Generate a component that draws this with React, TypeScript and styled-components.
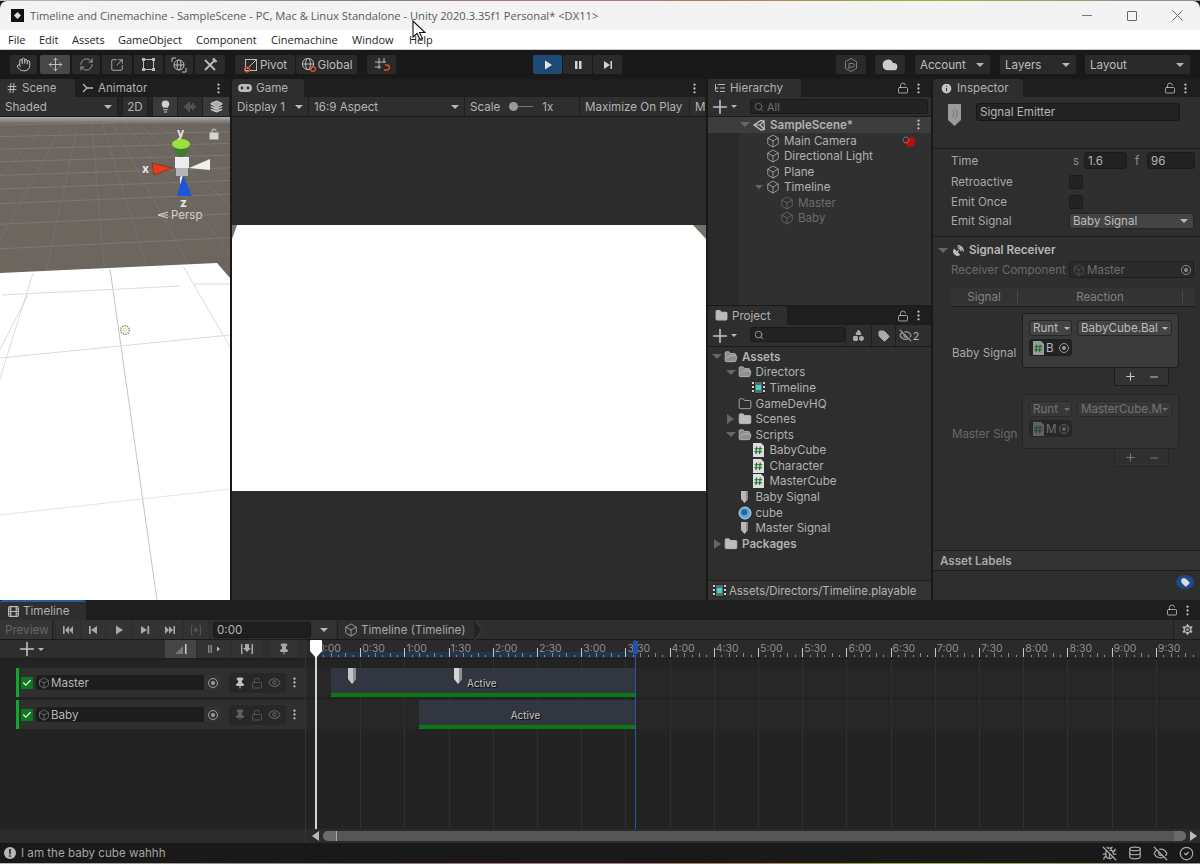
import React from "react";
import styled, { createGlobalStyle, css } from "styled-components";
import {
  AudioLines, Box, BugOff, CircleCheck, Cloud, Database, EllipsisVertical, Eye, EyeOff, Film, Folder, FolderOpen,
  Hand, Hash, Info, Layers, Lightbulb, ListTree, LockOpen, Minus, Move, Pin, Plus, RefreshCw,
  SatelliteDish, Search, Settings, Shapes, SquareArrowOutUpRight, Tag, Check,
} from "lucide-react";

const Global = createGlobalStyle`
  html, body { margin: 0; padding: 0; width: 1200px; height: 864px; overflow: hidden; background: #6f6a5f; }
  * { box-sizing: border-box; }
  #root { width: 1200px; height: 864px; }
`;

const Window = styled.div`
  width: 1200px; height: 864px; display: flex; flex-direction: column; background: #191919;
  font: 11.6px Inter, "Liberation Sans", sans-serif; color: #b4b4b4; overflow: hidden;
`;
const Wallpaper = styled.div`
  height: 1px; flex: none;
  background: linear-gradient(90deg,#b8b8b8 0,#8c7c70 30%,#a9759f 45%,#a88058 60%,#a5b034 78%,#7f93a8 100%);
`;
const TitleBar = styled.div`
  height: 29px; flex: none; background: #f3f3f3; display: flex; align-items: center; padding-left: 11px; color: #5a5a5a;
  font: 11.17px "Open Sans", sans-serif; border-radius: 7px 7px 0 0;
`;
const AppIcon = styled.span`
  width: 13px; height: 13px; background: #111; margin-right: 6px; display: flex; align-items: center; justify-content: center;
  &::after { content: ""; width: 5px; height: 5px; background: #ddd; transform: rotate(45deg); }
`;
const WinBtns = styled.div`
  margin-left: auto; display: flex; align-items: center; gap: 35px; padding-right: 17px;
`;
const WinMin = styled.span`width: 10px; height: 1px; background: #777;`;
const WinMax = styled.span`width: 10px; height: 10px; border: 1px solid #666; border-radius: 1px;`;
const Cursor = styled.svg`position: absolute; left: 412px; top: 20px;`;
const MenuBar = styled.div`
  height: 20px; flex: none; background: #fff; color: #222; display: flex; align-items: center; font: 11px "Open Sans", sans-serif;
  padding-left: 8px; border-bottom: 1px solid #ccc;
`;
const MenuItem = styled.span<{ $w: number }>`width: ${(p) => p.$w}px; flex: none;`;

const TopBar = styled.div`
  height: 29px; flex: none; display: flex; align-items: center; background: #191919; padding: 0 10px; position: relative;
`;
const ToolBtn = styled.div<{ $w: number; $on?: boolean; $ml?: number; $blue?: boolean }>`
  width: ${(p) => p.$w}px; height: 19px; flex: none; margin-left: ${(p) => p.$ml ?? 2}px;
  background: ${(p) => (p.$blue ? "#1f4a78" : p.$on ? "#474747" : "#2a2a2a")}; border-radius: 2px;
  display: flex; align-items: center; justify-content: center; gap: 1px; color: #bdbdbd;
`;
const DropBtn = styled(ToolBtn)`
  justify-content: space-between; padding: 0 6px 0 5px;
`;
const Caret = styled.span<{ $dir?: "down" | "right" | "left"; $c?: string; $s?: number }>`
  display: inline-block; flex: none; width: 0; height: 0;
  ${(p) =>
    p.$dir === "right"
      ? css`border-top: 5px solid transparent; border-bottom: 5px solid transparent; border-left: 7px solid ${p.$c ?? "#5f5f5f"};`
      : p.$dir === "left"
      ? css`border-top: 5px solid transparent; border-bottom: 5px solid transparent; border-right: 7px solid ${p.$c ?? "#5f5f5f"};`
      : css`border-left: ${p.$s ?? 4}px solid transparent; border-right: ${p.$s ?? 4}px solid transparent; border-top: ${p.$s ?? 4}px solid ${p.$c ?? "#b8b8b8"};`}
`;

const Panels = styled.div`
  height: 521px; flex: none; display: flex; gap: 2px;
`;
const Panel = styled.section<{ $w: number; $h?: number }>`
  width: ${(p) => p.$w}px; flex: ${(p) => (p.$h ? `0 0 ${p.$h}px` : "1 1 0")}; display: flex; flex-direction: column; background: #2e2e2e; min-height: 0; overflow: hidden;
`;
const Column = styled(Panel)`flex: none;`;
const Stack = styled.div<{ $w: number }>`
  width: ${(p) => p.$w}px; flex: none; display: flex; flex-direction: column; gap: 1px;
`;
const TabStrip = styled.div<{ $h?: number }>`
  height: ${(p) => p.$h ?? 18}px; flex: none; display: flex; align-items: stretch; background: #1e1e1e; color: #b0b0b0;
`;
const Tab = styled.div<{ $w: number; $on?: boolean; $pad?: number; $accent?: boolean; $gap?: number }>`
  width: ${(p) => p.$w}px; flex: none; display: flex; align-items: center; gap: ${(p) => p.$gap ?? 4}px; padding-left: ${(p) => p.$pad ?? 7}px;
  background: ${(p) => (p.$on ? "#2e2e2e" : "transparent")}; border-radius: 3px 3px 0 0;
  ${(p) => p.$accent && css`border-top: 2px solid #2b5a94;`}
`;
const TabTools = styled.div<{ $gap?: number; $pr?: number }>`
  margin-left: auto; display: flex; align-items: center; gap: ${(p) => p.$gap ?? 2}px; padding-right: ${(p) => p.$pr ?? 5}px; color: #bdbdbd;
`;

const Bar = styled.div<{ $h?: number }>`
  height: ${(p) => p.$h ?? 20}px; flex: none; display: flex; align-items: stretch; background: #2e2e2e; border-bottom: 1px solid #1b1b1b; position: relative;
`;
const Seg = styled.div<{ $w: number; $center?: boolean; $bg?: string }>`
  width: ${(p) => p.$w}px; flex: none; display: flex; align-items: center;
  justify-content: ${(p) => (p.$center ? "center" : "space-between")}; padding: ${(p) => (p.$center ? "0" : "0 5px")};
  background: ${(p) => p.$bg ?? "#2e2e2e"}; border-right: 1px solid #1f1f1f; white-space: nowrap; overflow: hidden;
`;
const SliderDot = styled.span`
  width: 9px; height: 9px; border-radius: 50%; background: #9a9a9a; margin-left: 9px; position: relative; flex: none;
  &::after { content: ""; position: absolute; left: 9px; top: 4px; width: 15px; height: 1px; background: #777; }
`;
const ScaleValue = styled.span`margin-left: 24px;`;
const LeftText = styled.span`flex: 1;`;

const SceneView = styled.svg`flex: 1; display: block; width: 100%; min-height: 0;`;
const GameView = styled.div`flex: 1; display: flex; flex-direction: column; background: #2b2b2b; position: relative;`;
const Letterbox = styled.div<{ $h: number }>`height: ${(p) => p.$h}px; flex: none; background: #2b2b2b;`;
const GameFrame = styled.div`
  flex: 1; background: #fff; position: relative;
  &::before, &::after { content: ""; position: absolute; top: 0; border-top: 14px solid #76716b; }
  &::before { left: 0; border-right: 5px solid transparent; }
  &::after { right: 0; border-left: 13px solid transparent; }
`;

const Search2 = styled.div<{ $w: number; $ml: number }>`
  width: ${(p) => p.$w}px; height: 15px; margin: 2px 0 0 ${(p) => p.$ml}px; background: #232323; border: 1px solid #1a1a1a; border-radius: 3px;
  display: flex; align-items: center; gap: 3px; padding-left: 3px; color: #6f6f6f; font-size: 11px;
`;
const AddBtn = styled.div<{ $w?: number; $pad?: number }>`
  width: ${(p) => p.$w ?? 40}px; flex: none; display: flex; align-items: center; gap: 0; padding-left: ${(p) => p.$pad ?? 1}px; color: #c4c4c4;
  svg { flex: none; margin: -2px 0; }
`;

const TreePane = styled.div<{ $strip?: number; $top?: number }>`
  flex: 1; min-height: 0; padding-top: ${(p) => p.$top ?? 0}px;
  background: ${(p) => (p.$strip ? `linear-gradient(90deg,#2a2a2a ${p.$strip}px,#303030 ${p.$strip}px)` : "#2e2e2e")};
`;
const TreeRow = styled.div<{ $i: number; $h?: number; $head?: boolean; $dim?: boolean; $bold?: boolean }>`
  height: ${(p) => p.$h ?? 15.5}px; display: flex; align-items: center; padding-left: ${(p) => p.$i}px; white-space: nowrap;
  color: ${(p) => (p.$dim ? "#6c6c6c" : "#b2b2b2")}; font-weight: ${(p) => (p.$bold ? 600 : 400)};
  background: ${(p) => (p.$head ? "#3d3d3d" : "transparent")}; position: relative;
`;
const CaretSlot = styled.span`width: 12px; flex: none; display: flex; justify-content: center; align-items: center;`;
const IconSlot = styled.span`width: 16px; flex: none; display: flex; justify-content: center; align-items: center; margin-right: 3px;`;
const RowEnd = styled.span<{ $r: number }>`position: absolute; right: ${(p) => p.$r}px; top: 1px; display: flex;`;
const PathBar = styled.div`
  height: 20px; flex: none; display: flex; align-items: center; padding-left: 5px; gap: 3px; background: #333; border-top: 1px solid #1f1f1f; font-size: 11.4px; white-space: nowrap;
`;
const SquareTool = styled.div<{ $w: number }>`
  width: ${(p) => p.$w}px; flex: none; border-left: 1px solid #1f1f1f; display: flex; align-items: center; justify-content: center; gap: 1px; font-size: 11px;
`;

const InspHead = styled.div`
  height: 52px; flex: none; display: flex; padding: 6px 0 0 14px; border-bottom: 1px solid #1d1d1d;
`;
const NameInput = styled.div`
  width: 204px; height: 18px; margin-left: 14px; background: #222; border: 1px solid #191919; border-radius: 3px;
  padding-left: 3px; display: flex; align-items: center; color: #b6b6b6;
`;
const Props = styled.div`padding: 1px 5px 6px 18px; border-bottom: 1px solid #1d1d1d; height: 88px; flex: none;`;
const PropRow = styled.div<{ $h: number; $dim?: boolean }>`
  height: ${(p) => p.$h}px; flex: none; display: flex; align-items: center; color: ${(p) => (p.$dim ? "#696969" : "#a8a8a8")};
`;
const PropLabel = styled.span`width: 118px; flex: none; white-space: nowrap;`;
const Unit = styled.span<{ $w: number }>`width: ${(p) => p.$w}px; flex: none; color: #8f8f8f; margin-left: ${(p) => (p.$w > 11 ? 0 : 4)}px;`;
const NumInput = styled.div<{ $w: number; $mr?: number }>`
  width: ${(p) => p.$w}px; height: 17px; background: #222; border: 1px solid #1b1b1b; border-radius: 3px; padding-left: 3px; margin-right: ${(p) => p.$mr ?? 0}px;
  display: flex; align-items: center; color: #b6b6b6;
`;
const Toggle = styled.div`width: 14px; height: 14px; background: #232323; border: 1px solid #1c1c1c; border-radius: 2px;`;
const Select = styled.div<{ $w: number; $h?: number; $dim?: boolean; $pr?: number }>`
  width: ${(p) => p.$w}px; height: ${(p) => p.$h ?? 16}px; flex: none; background: ${(p) => (p.$dim ? "#373737" : "#444")}; border: 1px solid ${(p) => (p.$dim ? "#2d2d2d" : "#262626")}; border-radius: 3px;
  display: flex; align-items: center; justify-content: space-between; padding: 0 ${(p) => p.$pr ?? 5}px 0 3px; overflow: hidden; white-space: nowrap;
  color: ${(p) => (p.$dim ? "#808080" : "#bdbdbd")};
`;
const Clipped = styled.span`overflow: hidden; flex: 1; min-width: 0;`;
const Section = styled.div`flex: 1; min-height: 0; padding: 0 5px 0 18px; display: flex; flex-direction: column;`;
const SecTitle = styled.div`
  height: 24px; flex: none; margin-left: -13px; padding-top: 2px; display: flex; align-items: center; gap: 4px; font-weight: 600; color: #b6b6b6;
`;
const ObjField = styled.div<{ $w: number; $dim?: boolean }>`
  width: ${(p) => p.$w}px; height: 17px; flex: none; display: flex; align-items: center; gap: 2px; padding: 0 2px 0 3px; overflow: hidden; white-space: nowrap;
  background: ${(p) => (p.$dim ? "#2a2a2a" : "#232323")}; border: 1px solid #1e1e1e; border-radius: 3px; color: ${(p) => (p.$dim ? "#6d6d6d" : "#b6b6b6")};
`;
const Dot = styled.span<{ $c?: string; $auto?: boolean }>`
  width: 10px; height: 10px; flex: none; margin-left: ${(p) => (p.$auto ? "auto" : "0")}; border: 1px solid ${(p) => p.$c ?? "#9a9a9a"}; border-radius: 50%; display: flex; align-items: center; justify-content: center;
  &::after { content: ""; width: 4px; height: 4px; border-radius: 50%; background: ${(p) => p.$c ?? "#9a9a9a"}; }
`;
const SigHead = styled.div`
  height: 19px; flex: none; margin-top: 10px; display: flex; align-items: center; color: #818181; background: #333; border-bottom: 1px solid #1b1b1b;
`;
const SigCol = styled.span<{ $w: number }>`
  width: ${(p) => p.$w}px; flex: none; text-align: center; border-right: 1px solid #4a4a4a; height: 12px; line-height: 12px;
`;
const SigRow = styled.div<{ $mt: number; $dim?: boolean }>`
  flex: none; margin-top: ${(p) => p.$mt}px; display: flex; flex-direction: column; ${(p) => p.$dim && css`opacity: .48;`}
`;
const SigMain = styled.div`display: flex; align-items: flex-end; margin-left: 1px;`;
const SigLabel = styled.span`width: 70px; flex: none; padding-bottom: 8px; white-space: nowrap; overflow: hidden; color: #a8a8a8;`;
const SigBox = styled.div`
  width: 157px; height: 55px; background: #3a3a3a; border: 1px solid #1d1d1d; border-radius: 3px; padding: 6px; display: flex; flex-wrap: wrap; align-content: flex-start; gap: 3px 5px;
`;
const SigFoot = styled.div`
  width: 55px; height: 18px; margin-left: 163px; background: #333; border: 1px solid #1d1d1d; border-top: 0; border-radius: 0 0 3px 3px;
  display: flex; align-items: center; justify-content: space-around; padding: 0 3px; color: #c8c8c8;
`;
const LabelsHead = styled.div`
  height: 21px; flex: none; padding-left: 7px; display: flex; align-items: center; font-weight: 600; color: #a8a8a8; background: #333;
  border-top: 1px solid #1d1d1d; border-bottom: 1px solid #1d1d1d;
`;
const LabelsBody = styled.div`height: 29px; flex: none; display: flex; align-items: flex-start; justify-content: flex-end; padding: 4px 6px 0 0;`;
const TagBadge = styled.span`
  width: 18px; height: 14px; border-radius: 50%; background: #1e4a8a; display: flex; align-items: center; justify-content: center; color: #ddd;
`;

const Timeline = styled.section`flex: 1; min-height: 0; display: flex; flex-direction: column; background: #232323;`;
const TransportBar = styled.div`
  height: 20px; flex: none; display: flex; align-items: stretch; background: #2e2e2e; border-bottom: 1px solid #1b1b1b;
`;
const PreviewBtn = styled.div`
  width: 53px; flex: none; display: flex; align-items: center; padding-left: 5px; color: #666; background: #353535; border-right: 1px solid #1f1f1f;
`;
const TransBtn = styled.div<{ $w: number; $ml?: number }>`
  width: ${(p) => p.$w}px; flex: none; display: flex; align-items: center; justify-content: center; margin-left: ${(p) => p.$ml ?? 1}px; background: #333; color: #a8a8a8;
`;
const TimeField = styled.div`
  width: 98px; height: 16px; margin: 2px 0 0 5px; background: #1f1f1f; border: 1px solid #181818; border-radius: 3px; padding-left: 3px; display: flex; align-items: center;
`;
const Crumb = styled.div`
  position: relative; width: 146px; margin-left: 1px; display: flex; align-items: center; gap: 3px; padding-left: 6px; background: #2e2e2e; color: #a8a8a8; border-left: 1px solid #1f1f1f; white-space: nowrap;
`;
const CrumbEnd = styled.svg`position: absolute; right: -1px; top: 0;`;
const GearSlot = styled.div`margin-left: auto; width: 27px; display: flex; align-items: center; justify-content: center; border-left: 1px solid #1f1f1f; color: #b0b0b0;`;

const TLBody = styled.div`flex: 1; min-height: 0; display: flex; position: relative;`;
const TLLeft = styled.div`width: 306px; flex: none; display: flex; flex-direction: column; border-right: 1px solid #333;`;
const TLHeadBar = styled.div`
  height: 19px; flex: none; display: flex; align-items: stretch; background: #2e2e2e; border-bottom: 1px solid #1d1d1d;
`;
const HeadBtn = styled.div<{ $w: number; $ml?: number; $on?: boolean }>`
  width: ${(p) => p.$w}px; margin-left: ${(p) => p.$ml ?? 2}px; flex: none; display: flex; align-items: center; justify-content: center; gap: 2px;
  background: ${(p) => (p.$on ? "#454545" : "#333")}; color: #a8a8a8;
`;
const TrackPad = styled.div`flex: 1; padding-top: 9px; display: flex; flex-direction: column; gap: 3px; background: #232323;`;
const TrackHead = styled.div`
  height: 29px; margin-left: 16px; background: #2f2f2f; border-left: 3px solid #0fa82a; display: flex; align-items: center; padding-left: 2px;
`;
const TrackCheck = styled.span`
  width: 12px; height: 12px; background: #0b7a1f; display: flex; align-items: center; justify-content: center; color: #eee; flex: none;
`;
const TrackName = styled.div`
  width: 185px; height: 15px; margin-left: 3px; background: #1d1d1d; border-radius: 3px; display: flex; align-items: center; gap: 1px; padding-left: 2px; color: #b6b6b6; overflow: hidden; position: relative;
`;
const NameTarget = styled.span`
  position: absolute; right: 0; top: 0; width: 17px; height: 15px; background: #333; display: flex; align-items: center; justify-content: center;
`;
const TrackTools = styled.div`
  width: 57px; height: 20px; margin-left: 8px; background: #272727; border-radius: 3px; display: flex; align-items: center; justify-content: space-around; padding: 0 2px; color: #5e5e5e;
`;
const TrackMenu = styled.span`margin-left: 2px; display: flex; color: #b0b0b0;`;

const TLRight = styled.div`flex: 1; min-width: 0; display: flex; flex-direction: column; position: relative;`;
const Ruler = styled.div`
  height: 19px; flex: none; background: #2a2a2a; position: relative; overflow: hidden; border-bottom: 1px solid #1c1c1c;
`;
const RangeStrip = styled.div`position: absolute; left: 10px; width: 320px; bottom: 1px; height: 5px; background: #243550;`;
const Major = styled.span`position: absolute; bottom: 1px; width: 1px; height: 9px; background: #c9c9c9;`;
const Minor = styled.span<{ $tall?: boolean }>`position: absolute; bottom: 1px; width: 1px; height: ${(p) => (p.$tall ? 4 : 2)}px; background: #8a8a8a;`;
const TickLabel = styled.span`position: absolute; top: 2px; font-size: 10.5px; line-height: 13px; color: #8f8f8f;`;

const Canvas = styled.div`flex: 1; position: relative; overflow: hidden; background: #232323;`;
const GridLine = styled.span`position: absolute; top: 0; bottom: 0; width: 1px; background: #303030;`;
const Band = styled.div<{ $t: number }>`position: absolute; left: 0; right: 0; top: ${(p) => p.$t}px; height: 29px; background: #272727;`;
const Clip = styled.div<{ $l: number; $w: number; $t: number; $tx: string }>`
  position: absolute; left: ${(p) => p.$l}px; width: ${(p) => p.$w}px; top: ${(p) => p.$t}px; height: 29px; background: #323640; border-bottom: 4px solid #097a14;
  display: flex; align-items: center; padding: 4px ${(p) => (p.$tx === "center" ? 4 : 0)}px 0 0; justify-content: ${(p) => p.$tx};
  font-size: 10px; color: #c8c8c8; text-shadow: 1px 1px 1px #000;
`;
const ClipText = styled.span<{ $ml?: number }>`margin-left: ${(p) => p.$ml ?? 0}px;`;
const Marker = styled.svg<{ $l: number }>`position: absolute; left: ${(p) => p.$l}px; top: 0;`;
const PlayHead = styled.div`
  position: absolute; left: 9px; top: 0; bottom: 0; width: 2px; background: #d4d4d4; pointer-events: none;
`;
const PlayTop = styled.svg`position: absolute; left: -5px; top: 0;`;
const EndLine = styled.div`
  position: absolute; left: 329px; top: 0; bottom: 0; width: 1px; background: #2a56a0;
  &::before { content: ""; position: absolute; left: -2px; top: 1px; width: 5px; height: 13px; background: #2252a8; }
`;
const ScrollRow = styled.div`height: 14px; flex: none; display: flex; align-items: stretch; background: #2b2b2b;`;
const ScrollLeft = styled.div`width: 306px; flex: none; background: #2b2b2b; border-right: 1px solid #363636;`;
const ScrollMain = styled.div`flex: 1; display: flex; align-items: center; padding: 0 3px 0 6px; gap: 4px;`;
const ScrollTrack = styled.div`
  flex: 1; height: 10px; border-radius: 5px; background: #565656; position: relative;
  &::before { content: ""; position: absolute; left: 0; top: 0; bottom: 0; width: 13px; background: #6c6c6c; border-radius: 5px 0 0 5px; border-right: 1px solid #aaa; }
  &::after { content: ""; position: absolute; right: 0; top: 0; bottom: 0; width: 12px; background: #6a6a6a; border-radius: 0 5px 5px 0; }
`;
const Status = styled.div`
  height: 20px; flex: none; display: flex; align-items: center; padding: 0 6px 0 4px; background: #191919; color: #a4a4a4; border-radius: 0 0 7px 7px;
`;
const StatusBang = styled.span`
  width: 12px; height: 12px; border-radius: 50%; background: #b8b8b8; color: #191919; font: 700 10px/12px Inter, sans-serif; text-align: center; margin-right: 5px;
`;
const StatusIcons = styled.div`margin-left: auto; display: flex; align-items: center; gap: 11px; color: #a8a8a8;`;

const Svg = (p: React.SVGProps<SVGSVGElement> & { s?: number; w?: number; h?: number }) => {
  const { s = 14, w, h, children, ...r } = p;
  return <svg width={w ?? s} height={h ?? s} viewBox={`0 0 ${w ?? s} ${h ?? s}`} {...r}>{children}</svg>;
};

const Dots = ({ c = "#c4c4c4" }: { c?: string }) => <EllipsisVertical size={13} color={c} strokeWidth={2.2} />;
const Lock = ({ c = "#c4c4c4", s = 12 }: { c?: string; s?: number }) => <LockOpen size={s} color={c} strokeWidth={1.6} />;
const AddIcon = () => <Plus size={22} strokeWidth={1.7} />;
const UnityLogo = () => (
  <Svg s={14} fill="none" stroke="#c6c6c6" strokeWidth={1.2}>
    <path d="M2 7 9 2.5l3 .5 .3 8.5-3 .5L2 7Z" /><path d="M2 7h6l4-4M8 7l4 4" />
  </Svg>
);
const PivotIcon = () => (
  <Svg s={16} fill="none"><rect x="2.5" y="2.5" width="11" height="11" stroke="#bbb" /><path d="M4 12 13 3" stroke="#bbb" /><circle cx="4" cy="12.5" r="2.4" stroke="#d8552c" strokeWidth="1.3" /></Svg>
);
const GlobalIcon = () => (
  <Svg s={16} fill="none"><circle cx="7" cy="7" r="5.6" stroke="#bbb" /><ellipse cx="7" cy="7" rx="2.4" ry="5.6" stroke="#bbb" /><path d="M1.4 7h11.2" stroke="#bbb" /><circle cx="12" cy="12" r="2.4" stroke="#d8552c" strokeWidth="1.3" /></Svg>
);
const SnapIcon = () => (
  <Svg s={16} fill="none"><path d="M5 1v11M10 1v5M1 5h11M1 10h6" stroke="#bbb" /><path d="M11 8h1.8a2.2 2.2 0 0 1 0 5H10" stroke="#d8552c" strokeWidth="1.5" /></Svg>
);
const RectIcon = () => (
  <Svg s={15} fill="none"><rect x="2.5" y="2.5" width="10" height="10" stroke="#bbb" /><path d="M1 1h3v3H1zM11 1h3v3h-3zM1 11h3v3H1zM11 11h3v3h-3z" fill="#bbb" /></Svg>
);
const TransIcon = () => (
  <Svg s={16} fill="none" stroke="#bbb"><circle cx="8" cy="8" r="5" /><ellipse cx="8" cy="8" rx="2" ry="5" /><path d="M3 8h10M1 5V1h4M15 11v4h-4" /></Svg>
);
const CustomIcon = () => (
  <Svg s={16} fill="none" stroke="#bbb" strokeWidth="1.8"><path d="M3 3l10 10M13 3 3 13" /><path d="M11 1.5l3.5 3.5" strokeWidth="2.4" /></Svg>
);
const CollabIcon = () => (
  <Svg s={16} fill="none" stroke="#7e7e7e"><path d="M8 1.5 13.5 4.5v7L8 14.5 2.5 11.5v-7Z" /><path d="M6 12V6.5h3.5a1.6 1.6 0 0 1 0 3.6H6" /></Svg>
);
const AnimatorIcon = () => (
  <Svg s={12} fill="none" stroke="#bbb" strokeWidth="1.3"><path d="M1 2l4 4-4 4M5 6h6" /></Svg>
);
const Transport = ({ d, c = "#bdbdbd", s = 12 }: { d: string; c?: string; s?: number }) => (
  <Svg s={s}><path d={d} fill={c} /></Svg>
);
const ScriptIcon = ({ dim }: { dim?: boolean }) => (
  <Svg w={11} h={14}>
    <path d="M0 0h8l3 3v11H0Z" fill={dim ? "#999" : "#dedede"} />
    <path d="M3.6 3.5 3 11M7.2 3.5 6.6 11M1.6 5.8h7.6M1.4 8.8h7.6" stroke="#0f6a22" strokeWidth="1.1" fill="none" />
  </Svg>
);
const FilmIcon = () => (
  <Svg w={13} h={13}>
    <rect width="13" height="13" fill="#2a2a2a" />
    <rect x="3" y="1" width="7" height="11" fill="#5a6a68" />
    <path d="M0 1h2v2H0zM0 5h2v2H0zM0 9h2v2H0zM11 1h2v2h-2zM11 5h2v2h-2zM11 9h2v2h-2z" fill="#d0d0d0" />
    <rect x="4" y="4" width="5" height="5" fill="#3fd6c4" />
  </Svg>
);
const SignalIcon = () => (
  <Svg w={7} h={12}><path d="M0 0h7v8l-3.5 4L0 8Z" fill="#b8b8b8" /><path d="M5 0h2v8l-2 2Z" fill="#8a8a8a" /></Svg>
);
const CubeMat = () => (
  <Svg s={14}><circle cx="7" cy="7" r="6" fill="#5ca8dc" stroke="#c4d4e0" /><circle cx="6.3" cy="6.3" r="3" fill="#2a6496" /></Svg>
);
const CubeIcon = ({ c = "#b8b8b8", s = 14 }: { c?: string; s?: number }) => <Box size={s} color={c} strokeWidth={1.3} />;
const FolderFull = ({ open }: { open?: boolean }) =>
  open ? <FolderOpen size={14} color="#bdbdbd" fill="#8e8e8e" strokeWidth={1.4} /> : <Folder size={14} color="#bdbdbd" fill="#bdbdbd" strokeWidth={1.4} />;
const FolderPlain = () => <Folder size={14} color="#bdbdbd" strokeWidth={1.4} />;

const groundH = [5, 16, 28, 40, 53, 66, 80, 100, 124];
const groundV = [-90, -20, 45, 105, 150, 195, 250, 310, 380];

const Scene = () => (
  <SceneView viewBox="0 0 230 483" preserveAspectRatio="none">
    <defs>
      <linearGradient id="sky" x1="0" y1="0" x2="0" y2="1">
        <stop offset="0" stopColor="#a6acac" /><stop offset="1" stopColor="#6e675f" />
      </linearGradient>
    </defs>
    <rect width="230" height="483" fill="#6d665f" />
    <rect width="230" height="7" fill="url(#sky)" />
    {groundH.map((y, i) => (
      <path key={i} d={`M0 ${y + 3 + i * 0.6}L230 ${y - 1 - i * 0.3}`} stroke="#827e7a" strokeWidth="0.7" />
    ))}
    {groundV.map((x, i) => (
      <path key={i} d={`M${88 + (x - 88) * 0.22} 5L${x} 160`} stroke="#7a7672" strokeWidth="0.7" />
    ))}
    <path d="M0 156 217 146 230 161V483H0Z" fill="#fff" />
    <g stroke="#cfd9e3" strokeWidth="0.9" fill="none">
      <path d="M33 156 -12 300" />
      <path d="M110 152 157 483" stroke="#b4bec8" />
      <path d="M183 149 230 230" />
      <path d="M2 178 180 169M194 167 230 167" />
      <path d="M0 241 230 218" />
      <path d="M0 398 230 372" stroke="#dbe2e8" />
      <path d="M28 178 -4 240" />
    </g>
    <g>
      <circle cx="125" cy="213" r="4.3" fill="none" stroke="#8d8d8d" strokeWidth="1.6" strokeDasharray="1.4 1" />
      <circle cx="125" cy="213" r="2.6" fill="#f2eebd" />
    </g>
    <path d="M173 32 181 42 190 32Z" fill="#3f7d2a" />
    <ellipse cx="181" cy="27" rx="9" ry="5" fill="#98e23a" />
    <path d="M152 46 173 51 154 58Z" fill="#e8391a" stroke="#6c1a10" strokeWidth=".5" />
    <path d="M189 51 210 42 210 53Z" fill="#f0f0f0" />
    <rect x="175" y="40" width="14" height="11" fill="#ececec" />
    <rect x="176" y="51" width="12" height="8" fill="#b5b5b5" />
    <path d="M180 60 183 58 183 66 180 67Z" fill="#eee" />
    <path d="M183 58 177 79 192 79Z" fill="#1d55d8" />
    <g fontFamily="Inter, sans-serif" fontWeight="700" fontSize="12" fill="#e8e8e8">
      <text x="177" y="20">y</text>
      <text x="142" y="56">x</text>
      <text x="180" y="90">z</text>
    </g>
    <text x="171" y="102" fontFamily="Inter, sans-serif" fontSize="11.5" fill="#d0d0d0">Persp</text>
    <path d="M168 95 158 98 168 101M158 98h10" stroke="#d0d0d0" fill="none" />
    <g fill="none" stroke="#d4d4d4"><rect x="210" y="16" width="8" height="6" fill="#d4d4d4" /><path d="M212 16v-2a2 2 0 0 1 4 0" /></g>
  </SceneView>
);

const labels = Array.from({ length: 20 }, (_, i) => {
  const m = Math.floor(i / 2);
  return { x: 10 + i * 44.2, t: `${m}:${i % 2 ? "30" : "00"}` };
});

export default function App() {
  return (
    <Window>
      <Global />
      <Wallpaper />
      <TitleBar>
        <AppIcon />
        Timeline and Cinemachine - SampleScene - PC, Mac &amp; Linux Standalone - Unity 2020.3.35f1 Personal* &lt;DX11&gt;
        <WinBtns>
          <WinMin />
          <WinMax />
          <Svg s={11} stroke="#666"><path d="M.5.5l10 10M10.5.5l-10 10" /></Svg>
        </WinBtns>
      </TitleBar>
      <MenuBar>
        <MenuItem $w={31}>File</MenuItem>
        <MenuItem $w={33}>Edit</MenuItem>
        <MenuItem $w={46}>Assets</MenuItem>
        <MenuItem $w={78}>GameObject</MenuItem>
        <MenuItem $w={75}>Component</MenuItem>
        <MenuItem $w={81}>Cinemachine</MenuItem>
        <MenuItem $w={57}>Window</MenuItem>
        <MenuItem $w={30}>Help</MenuItem>
      </MenuBar>
      <Cursor width="15" height="22" viewBox="0 0 15 22"><path d="M1 1v16l4-3.5 3 6 2.5-1-3-6H13Z" fill="#fff" stroke="#111" strokeWidth="1.1" /></Cursor>
      <TopBar>
        <ToolBtn $w={27} $ml={0}><Hand size={15} color="#c8c8c8" strokeWidth={1.6} /></ToolBtn>
        <ToolBtn $w={30} $ml={3} $on><Move size={15} color="#c4c4c4" strokeWidth={1.5} /></ToolBtn>
        <ToolBtn $w={28}><RefreshCw size={15} color="#aaa" strokeWidth={1.4} /></ToolBtn>
        <ToolBtn $w={30}><SquareArrowOutUpRight size={14} color="#bbb" strokeWidth={1.5} /></ToolBtn>
        <ToolBtn $w={29}><RectIcon /></ToolBtn>
        <ToolBtn $w={28}><TransIcon /></ToolBtn>
        <ToolBtn $w={30}><CustomIcon /></ToolBtn>
        <ToolBtn $w={60} $ml={10}><PivotIcon />Pivot</ToolBtn>
        <ToolBtn $w={61} $ml={1}><GlobalIcon />Global</ToolBtn>
        <ToolBtn $w={29} $ml={10}><SnapIcon /></ToolBtn>
        <ToolBtn $w={29} $ml={137} $blue><Transport d="M3 1.5v9l7-4.5Z" c="#e4e4e4" /></ToolBtn>
        <ToolBtn $w={29} $ml={1}><Transport d="M3 2h2.5v8H3zM7 2h2.5v8H7z" c="#d4d4d4" /></ToolBtn>
        <ToolBtn $w={29} $ml={1}><Transport d="M2 2v8l6-4ZM8.5 2H10v8H8.5z" c="#d4d4d4" /></ToolBtn>
        <ToolBtn $w={30} $ml={214}><CollabIcon /></ToolBtn>
        <ToolBtn $w={30} $ml={9}><Cloud size={16} color="#ccc" fill="#ccc" /></ToolBtn>
        <DropBtn $w={75} $ml={10}>Account<Caret /></DropBtn>
        <DropBtn $w={76} $ml={10}>Layers<Caret /></DropBtn>
        <DropBtn $w={105} $ml={9}>Layout<Caret /></DropBtn>
      </TopBar>
      <Panels>
        <Column $w={230}>
          <TabStrip>
            <Tab $w={75} $on $pad={6}><Hash size={12} color="#bbb" strokeWidth={2} />Scene</Tab>
            <Tab $w={85}><AnimatorIcon />Animator</Tab>
            <TabTools><Dots /></TabTools>
          </TabStrip>
          <Bar>
            <Seg $w={118}><LeftText>Shaded</LeftText><Caret /></Seg>
            <Seg $w={5} $center $bg="#232323" />
            <Seg $w={25} $center>2D</Seg>
            <Seg $w={5} $center $bg="#232323" />
            <Seg $w={25} $center $bg="#3a3a3a"><Lightbulb size={13} color="#d0d0d0" fill="#d0d0d0" /></Seg>
            <Seg $w={25} $center><AudioLines size={12} color="#777" /></Seg>
            <Seg $w={27} $center $bg="#3a3a3a"><Layers size={13} color="#ccc" fill="#aaa" /></Seg>
          </Bar>
          <Scene />
        </Column>
        <Column $w={474}>
          <TabStrip>
            <Tab $w={72} $on $pad={6}><Svg w={14} h={10} fill="#bbb"><rect y="1" width="14" height="8" rx="4" /><circle cx="4" cy="5" r="1.4" fill="#2e2e2e" /><circle cx="10" cy="5" r="1.4" fill="#2e2e2e" /></Svg>Game</Tab>
            <TabTools><Dots /></TabTools>
          </TabStrip>
          <Bar>
            <Seg $w={77}><LeftText>Display 1</LeftText><Caret /></Seg>
            <Seg $w={156}><LeftText>16:9 Aspect</LeftText><Caret /></Seg>
            <Seg $w={115}>Scale<SliderDot /><ScaleValue>1x</ScaleValue><LeftText /></Seg>
            <Seg $w={110}>Maximize On Play</Seg>
            <Seg $w={16}>M</Seg>
          </Bar>
          <GameView>
            <Letterbox $h={108} />
            <GameFrame />
            <Letterbox $h={109} />
          </GameView>
        </Column>
        <Stack $w={223}>
          <Panel $w={223} $h={226}>
            <TabStrip $h={18}>
              <Tab $w={93} $on $pad={6}><ListTree size={12} color="#bbb" />Hierarchy</Tab>
              <TabTools $gap={3} $pr={6}><Lock /><Dots /></TabTools>
            </TabStrip>
            <Bar>
              <AddBtn><AddIcon /><Caret $s={3} /></AddBtn>
              <Search2 $w={178} $ml={2}><Search size={10} />All</Search2>
            </Bar>
            <TreePane $strip={31}>
              <TreeRow $i={31} $h={15.5} $head $bold>
                <CaretSlot><Caret $c="#666" $s={5} /></CaretSlot><IconSlot><UnityLogo /></IconSlot>SampleScene*
                <RowEnd $r={6}><Dots /></RowEnd>
              </TreeRow>
              <TreeRow $i={45} $h={16}><CaretSlot /><IconSlot><CubeIcon /></IconSlot>Main Camera
                <RowEnd $r={15}><Svg s={15}><path d="M3 8l8-6 3 3v7l-7 1Z" fill="#b01010" /><circle cx="5" cy="6" r="3" fill="none" stroke="#bbb" strokeDasharray="1 1" /></Svg></RowEnd>
              </TreeRow>
              <TreeRow $i={45}><CaretSlot /><IconSlot><CubeIcon /></IconSlot>Directional Light</TreeRow>
              <TreeRow $i={45}><CaretSlot /><IconSlot><CubeIcon /></IconSlot>Plane</TreeRow>
              <TreeRow $i={45}><CaretSlot><Caret $c="#666" $s={4} /></CaretSlot><IconSlot><CubeIcon /></IconSlot>Timeline</TreeRow>
              <TreeRow $i={59} $dim><CaretSlot /><IconSlot><CubeIcon c="#6c6c6c" /></IconSlot>Master</TreeRow>
              <TreeRow $i={59} $dim><CaretSlot /><IconSlot><CubeIcon c="#6c6c6c" /></IconSlot>Baby</TreeRow>
            </TreePane>
          </Panel>
          <Panel $w={223}>
            <TabStrip $h={19}>
              <Tab $w={79} $on><Folder size={13} color="#bbb" fill="#bbb" />Project</Tab>
              <TabTools $gap={3} $pr={6}><Lock /><Dots /></TabTools>
            </TabStrip>
            <Bar $h={22}>
              <AddBtn><AddIcon /><Caret $s={3} /></AddBtn>
              <Search2 $w={95} $ml={2}><Search size={10} color="#aaa" /></Search2>
              <SquareTool $w={26}><Shapes size={13} color="#aaa" fill="#aaa" /></SquareTool>
              <SquareTool $w={24}><Tag size={12} color="#aaa" fill="#aaa" /></SquareTool>
              <SquareTool $w={27}><EyeOff size={13} color="#aaa" />2</SquareTool>
            </Bar>
            <TreePane $top={2}>
              <TreeRow $i={3} $h={15.58} $bold><CaretSlot><Caret $c="#666" $s={5} /></CaretSlot><IconSlot><FolderFull open /></IconSlot>Assets</TreeRow>
              <TreeRow $i={16.5} $h={15.58}><CaretSlot><Caret $c="#666" $s={5} /></CaretSlot><IconSlot><FolderFull open /></IconSlot>Directors</TreeRow>
              <TreeRow $i={30.5} $h={15.58}><CaretSlot /><IconSlot><FilmIcon /></IconSlot>Timeline</TreeRow>
              <TreeRow $i={16.5} $h={15.58}><CaretSlot /><IconSlot><FolderPlain /></IconSlot>GameDevHQ</TreeRow>
              <TreeRow $i={16.5} $h={15.58}><CaretSlot><Caret $dir="right" $c="#666" /></CaretSlot><IconSlot><FolderFull /></IconSlot>Scenes</TreeRow>
              <TreeRow $i={16.5} $h={15.58}><CaretSlot><Caret $c="#666" $s={5} /></CaretSlot><IconSlot><FolderFull open /></IconSlot>Scripts</TreeRow>
              <TreeRow $i={30.5} $h={15.58}><CaretSlot /><IconSlot><ScriptIcon /></IconSlot>BabyCube</TreeRow>
              <TreeRow $i={30.5} $h={15.58}><CaretSlot /><IconSlot><ScriptIcon /></IconSlot>Character</TreeRow>
              <TreeRow $i={30.5} $h={15.58}><CaretSlot /><IconSlot><ScriptIcon /></IconSlot>MasterCube</TreeRow>
              <TreeRow $i={16.5} $h={15.58}><CaretSlot /><IconSlot><SignalIcon /></IconSlot>Baby Signal</TreeRow>
              <TreeRow $i={16.5} $h={15.58}><CaretSlot /><IconSlot><CubeMat /></IconSlot>cube</TreeRow>
              <TreeRow $i={16.5} $h={15.58}><CaretSlot /><IconSlot><SignalIcon /></IconSlot>Master Signal</TreeRow>
              <TreeRow $i={3} $h={15.58} $bold><CaretSlot><Caret $dir="right" $c="#666" /></CaretSlot><IconSlot><FolderFull /></IconSlot>Packages</TreeRow>
            </TreePane>
            <PathBar><FilmIcon />Assets/Directors/Timeline.playable</PathBar>
          </Panel>
        </Stack>
        <Column $w={267}>
          <TabStrip>
            <Tab $w={90} $on><Info size={13} color="#2e2e2e" fill="#c4c4c4" />Inspector</Tab>
            <TabTools $gap={3} $pr={8}><Lock /><Dots /></TabTools>
          </TabStrip>
          <InspHead>
            <Svg w={15} h={24}><path d="M1 1h13v16l-6.5 6L1 17Z" fill="#9a9a9a" /><path d="M5 7a4 4 0 0 1 0 7M7.5 5a7 7 0 0 1 0 11" stroke="#777" fill="none" /></Svg>
            <NameInput>Signal Emitter</NameInput>
          </InspHead>
          <Props>
            <PropRow $h={21}>
              <PropLabel>Time</PropLabel>
              <Unit $w={11}>s</Unit><NumInput $w={43} $mr={8}>1.6</NumInput><Unit $w={12}>f</Unit><NumInput $w={48}>96</NumInput>
            </PropRow>
            <PropRow $h={21}><PropLabel>Retroactive</PropLabel><Toggle /></PropRow>
            <PropRow $h={19}><PropLabel>Emit Once</PropLabel><Toggle /></PropRow>
            <PropRow $h={19}><PropLabel>Emit Signal</PropLabel><Select $w={125}>Baby Signal<Caret /></Select></PropRow>
          </Props>
          <Section>
            <SecTitle><Caret $c="#666" $s={5} /><SatelliteDish size={13} color="#bbb" fill="#bbb" />Signal Receiver</SecTitle>
            <PropRow $h={17} $dim>
              <PropLabel>Receiver Component</PropLabel>
              <ObjField $w={125} $dim><CubeIcon c="#5c5c5c" s={12} />Master<Dot $c="#8a8a8a" $auto /></ObjField>
            </PropRow>
            <SigHead><SigCol $w={67}>Signal</SigCol><SigCol $w={165}>Reaction</SigCol></SigHead>
            <SigRow $mt={6}>
              <SigMain>
                <SigLabel>Baby Signal</SigLabel>
                <SigBox>
                  <Select $w={43} $pr={1}><Clipped>Runt</Clipped><Caret $s={3} /></Select>
                  <Select $w={95} $pr={3}><Clipped>BabyCube.Bal</Clipped><Caret $s={3} /></Select>
                  <ObjField $w={43}><ScriptIcon dim /><Clipped>B</Clipped><Dot $auto /></ObjField>
                </SigBox>
              </SigMain>
              <SigFoot><Plus size={13} strokeWidth={2} /><Minus size={12} strokeWidth={2} /></SigFoot>
            </SigRow>
            <SigRow $mt={8} $dim>
              <SigMain>
                <SigLabel>Master Sign</SigLabel>
                <SigBox>
                  <Select $w={43} $pr={1}><Clipped>Runt</Clipped><Caret $s={3} /></Select>
                  <Select $w={95} $pr={3}><Clipped>MasterCube.M</Clipped><Caret $s={3} /></Select>
                  <ObjField $w={43}><ScriptIcon dim /><Clipped>M</Clipped><Dot $auto /></ObjField>
                </SigBox>
              </SigMain>
              <SigFoot><Plus size={13} strokeWidth={2} /><Minus size={12} strokeWidth={2} /></SigFoot>
            </SigRow>
          </Section>
          <LabelsHead>Asset Labels</LabelsHead>
          <LabelsBody><TagBadge><Tag size={9} fill="#ddd" /></TagBadge></LabelsBody>
        </Column>
      </Panels>
      <Timeline>
        <TabStrip $h={20}>
          <Tab $w={86} $on $accent $gap={3}><Film size={13} color="#bbb" />Timeline</Tab>
          <TabTools $gap={3} $pr={6}><Lock /><Dots /></TabTools>
        </TabStrip>
        <TransportBar>
          <PreviewBtn>Preview</PreviewBtn>
          <TransBtn $w={24} $ml={3}><Transport d="M1 2h1.6v8H1zM3 6l4-4v8ZM7 6l4-4v8Z" c="#a8a8a8" /></TransBtn>
          <TransBtn $w={24}><Transport d="M2 2h1.8v8H2zM4 6l6-4v8Z" c="#a8a8a8" /></TransBtn>
          <TransBtn $w={25}><Transport d="M3 1.5v9l7-4.5Z" c="#a8a8a8" /></TransBtn>
          <TransBtn $w={24} $ml={2}><Transport d="M2 2v8l6-4ZM8.4 2h1.8v8H8.4z" c="#a8a8a8" /></TransBtn>
          <TransBtn $w={24}><Transport d="M1 2v8l4-4ZM5 2v8l4-4ZM9.4 2H11v8H9.4z" c="#a8a8a8" /></TransBtn>
          <TransBtn $w={24} $ml={2}><Transport d="M1 1h2v1H2v8h1v1H1ZM11 1H9v1h1v8H9v1h2ZM4.5 3v6l4-3Z" c="#555" /></TransBtn>
          <TimeField>0:00</TimeField>
          <TransBtn $w={24} $ml={1}><Caret $s={4} /></TransBtn>
          <Crumb>
            <CubeIcon />Timeline (Timeline)
            <CrumbEnd width="10" height="20" viewBox="0 0 10 20" fill="none"><path d="M0 0h1l7 10-7 10H0" fill="#232323" /><path d="M1 0l7 10-7 10" stroke="#444" /></CrumbEnd>
          </Crumb>
          <GearSlot><Settings size={15} color="#2e2e2e" fill="#b8b8b8" strokeWidth={2} /></GearSlot>
        </TransportBar>
        <TLBody>
          <TLLeft>
            <TLHeadBar>
              <AddBtn $w={50} $pad={16}><AddIcon /><Caret $s={3} /></AddBtn>
              <HeadBtn $w={31} $ml={115} $on><Svg s={14}><path d="M1 12 9 4v8Z" fill="#777" /><path d="M11 2h1.5v10H11z" fill="#ccc" /></Svg></HeadBtn>
              <HeadBtn $w={32}><Svg s={14}><path d="M1 3h1.4v8H1zM3.5 3h1.4v8H3.5z" fill="#888" /><path d="M6 7h4V4.5L13 7l-3 2.5V7" fill="#bbb" /></Svg></HeadBtn>
              <HeadBtn $w={30}><Svg s={14}><path d="M1 2h1.4v10H1zM11.6 2H13v10h-1.6zM5 2h4v4h2L7 10 3 6h2Z" fill="#aaa" /></Svg></HeadBtn>
              <HeadBtn $w={28} $ml={8}><Pin size={12} fill="#aaa" /></HeadBtn>
            </TLHeadBar>
            <TrackPad>
              <TrackHead>
                <TrackCheck><Check size={10} strokeWidth={3} /></TrackCheck>
                <TrackName><CubeIcon c="#888" s={12} />Master<NameTarget><Dot /></NameTarget></TrackName>
                <TrackTools><Pin size={12} color="#c0c0c0" fill="#c0c0c0" /><Lock c="#5e5e5e" /><Eye size={13} color="#5e5e5e" /></TrackTools>
                <TrackMenu><Dots /></TrackMenu>
              </TrackHead>
              <TrackHead>
                <TrackCheck><Check size={10} strokeWidth={3} /></TrackCheck>
                <TrackName><CubeIcon c="#888" s={12} />Baby<NameTarget><Dot /></NameTarget></TrackName>
                <TrackTools><Pin size={12} color="#5e5e5e" fill="#5e5e5e" /><Lock c="#5e5e5e" /><Eye size={13} color="#5e5e5e" /></TrackTools>
                <TrackMenu><Dots /></TrackMenu>
              </TrackHead>
            </TrackPad>
          </TLLeft>
          <TLRight>
            <Ruler>
              <RangeStrip />
              {labels.map((l) => (
                <React.Fragment key={l.t}>
                  <Major style={{ left: l.x }} />
                  <TickLabel style={{ left: l.x + 2 }}>{l.t}</TickLabel>
                  {[1, 2, 3, 4, 5].map((k) => (
                    <Minor key={k} $tall={k === 2 || k === 4} style={{ left: l.x + (k * 44.2) / 6 }} />
                  ))}
                </React.Fragment>
              ))}
            </Ruler>
            <Canvas>
              <Band $t={9} />
              <Band $t={41} />
              {labels.map((l) => <GridLine key={l.t} style={{ left: l.x }} />)}
              <Clip $l={25} $w={305} $t={9} $tx="flex-start">
                <ClipText $ml={136}>Active</ClipText>
                <Marker $l={16} width="10" height="16" viewBox="0 0 10 16"><path d="M1 0h8v11l-4 5-4-5Z" fill="#c4c4c4" /><path d="M6 0h3v11l-3 4Z" fill="#8f8f8f" /></Marker>
                <Marker $l={122} width="10" height="16" viewBox="0 0 10 16"><path d="M1 0h8v11l-4 5-4-5Z" fill="#d4d4d4" /><path d="M6 0h3v11l-3 4Z" fill="#8f8f8f" /></Marker>
              </Clip>
              <Clip $l={113} $w={217} $t={41} $tx="center">Active</Clip>
            </Canvas>
            <EndLine />
            <PlayHead><PlayTop width="12" height="18" viewBox="0 0 12 18"><path d="M0 1a1 1 0 0 1 1-1h10a1 1 0 0 1 1 1v10l-6 7-6-7Z" fill="#fff" /></PlayTop></PlayHead>
          </TLRight>
        </TLBody>
        <ScrollRow>
          <ScrollLeft />
          <ScrollMain>
            <Caret $dir="left" $c="#bbb" />
            <ScrollTrack />
            <Caret $dir="right" $c="#bbb" />
          </ScrollMain>
        </ScrollRow>
      </Timeline>
      <Status>
        <StatusBang>!</StatusBang>I am the baby cube wahhh
        <StatusIcons>
          <BugOff size={15} />
          <Database size={14} />
          <EyeOff size={15} />
          <CircleCheck size={15} />
        </StatusIcons>
      </Status>
      <Wallpaper />
    </Window>
  );
}
